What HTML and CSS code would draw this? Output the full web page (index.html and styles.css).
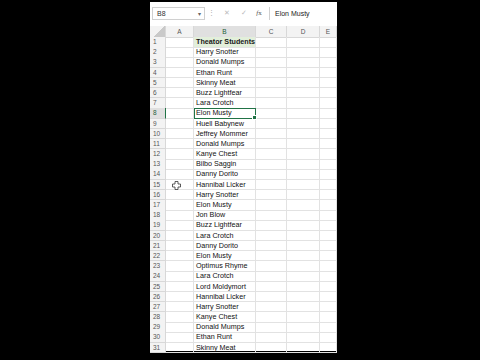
FILE: index.html
```html
<!DOCTYPE html>
<html lang="en">
<head>
    <meta charset="UTF-8">
    <meta name="viewport" content="width=device-width, initial-scale=1.0">
    <title>Theator Students</title>
    <link rel="stylesheet" href="styles.css">
</head>
<body>
    <div class="excel">
        <div class="formula-bar">
            <div class="name-box"><span>B8</span><span class="arrow">&#9662;</span></div>
            <span class="dots">&#8942;</span>
            <span class="fbtn">&#10005;</span>
            <span class="fbtn">&#10003;</span>
            <span class="fx"><i>f</i>x</span>
            <div class="formula">Elon Musty</div>
        </div>
        <div class="grid">
            <div class="row head"><span class="corner"></span><span>A</span><span class="sel">B</span><span>C</span><span>D</span><span>E</span></div>
            <div class="row"><span class="rh">1</span><span></span><span class="title">Theator Students</span><span></span><span></span><span></span></div>
            <div class="row"><span class="rh">2</span><span></span><span>Harry Snotter</span><span></span><span></span><span></span></div>
            <div class="row"><span class="rh">3</span><span></span><span>Donald Mumps</span><span></span><span></span><span></span></div>
            <div class="row"><span class="rh">4</span><span></span><span>Ethan Runt</span><span></span><span></span><span></span></div>
            <div class="row"><span class="rh">5</span><span></span><span>Skinny Meat</span><span></span><span></span><span></span></div>
            <div class="row"><span class="rh">6</span><span></span><span>Buzz Lightfear</span><span></span><span></span><span></span></div>
            <div class="row"><span class="rh">7</span><span></span><span>Lara Crotch</span><span></span><span></span><span></span></div>
            <div class="row"><span class="rh active">8</span><span></span><span class="cursor">Elon Musty</span><span></span><span></span><span></span></div>
            <div class="row"><span class="rh">9</span><span></span><span>Huell Babynew</span><span></span><span></span><span></span></div>
            <div class="row"><span class="rh">10</span><span></span><span>Jeffrey Mommer</span><span></span><span></span><span></span></div>
            <div class="row"><span class="rh">11</span><span></span><span>Donald Mumps</span><span></span><span></span><span></span></div>
            <div class="row"><span class="rh">12</span><span></span><span>Kanye Chest</span><span></span><span></span><span></span></div>
            <div class="row"><span class="rh">13</span><span></span><span>Bilbo Saggin</span><span></span><span></span><span></span></div>
            <div class="row"><span class="rh">14</span><span></span><span>Danny Dorito</span><span></span><span></span><span></span></div>
            <div class="row"><span class="rh">15</span><span class="pointer-cell"><svg class="pointer" width="9" height="9" viewBox="0 0 9 9"><path d="M3 0.5h3v2.5h2.5v3h-2.5v2.5h-3v-2.5h-2.5v-3h2.5z" fill="#fff" stroke="#333" stroke-width="0.8"/></svg></span><span>Hannibal Licker</span><span></span><span></span><span></span></div>
            <div class="row"><span class="rh">16</span><span></span><span>Harry Snotter</span><span></span><span></span><span></span></div>
            <div class="row"><span class="rh">17</span><span></span><span>Elon Musty</span><span></span><span></span><span></span></div>
            <div class="row"><span class="rh">18</span><span></span><span>Jon Blow</span><span></span><span></span><span></span></div>
            <div class="row"><span class="rh">19</span><span></span><span>Buzz Lightfear</span><span></span><span></span><span></span></div>
            <div class="row"><span class="rh">20</span><span></span><span>Lara Crotch</span><span></span><span></span><span></span></div>
            <div class="row"><span class="rh">21</span><span></span><span>Danny Dorito</span><span></span><span></span><span></span></div>
            <div class="row"><span class="rh">22</span><span></span><span>Elon Musty</span><span></span><span></span><span></span></div>
            <div class="row"><span class="rh">23</span><span></span><span>Optimus Rhyme</span><span></span><span></span><span></span></div>
            <div class="row"><span class="rh">24</span><span></span><span>Lara Crotch</span><span></span><span></span><span></span></div>
            <div class="row"><span class="rh">25</span><span></span><span>Lord Moldymort</span><span></span><span></span><span></span></div>
            <div class="row"><span class="rh">26</span><span></span><span>Hannibal Licker</span><span></span><span></span><span></span></div>
            <div class="row"><span class="rh">27</span><span></span><span>Harry Snotter</span><span></span><span></span><span></span></div>
            <div class="row"><span class="rh">28</span><span></span><span>Kanye Chest</span><span></span><span></span><span></span></div>
            <div class="row"><span class="rh">29</span><span></span><span>Donald Mumps</span><span></span><span></span><span></span></div>
            <div class="row"><span class="rh">30</span><span></span><span>Ethan Runt</span><span></span><span></span><span></span></div>
            <div class="row"><span class="rh">31</span><span></span><span>Skinny Meat</span><span></span><span></span><span></span></div>
        </div>
    </div>
</body>
</html>
```

FILE: styles.css
```css
body {
    margin: 0;
    width: 480px;
    height: 360px;
    background-color: #000;
    font-family: "Liberation Sans", Arial, sans-serif;
    overflow: hidden;
}
.excel {
    width: 187px;
    height: 349px;
    margin: 2px 0 0 150px;
    background-color: #fff;
}
.formula-bar {
    display: flex;
    align-items: center;
    height: 22px;
    padding: 0 0 0 2px;
    box-sizing: border-box;
    font-size: 7px;
    color: #333;
}
.name-box {
    display: flex;
    justify-content: space-between;
    align-items: center;
    width: 53px;
    height: 13px;
    padding: 0 3px 0 4px;
    box-sizing: border-box;
    border: 1px solid #d0d0d0;
}
.arrow {
    font-size: 6px;
    color: #666;
}
.dots {
    margin-left: 3px;
    width: 10px;
    color: #aaa;
}
.fbtn {
    width: 17px;
    text-align: center;
    color: #bbb;
}
.fx {
    width: 14px;
    text-align: center;
    color: #555;
    font-family: "Liberation Serif", serif;
}
.formula {
    flex: 1;
    height: 13px;
    line-height: 13px;
    margin-left: 3px;
    padding-left: 5px;
    border-left: 1px solid #d0d0d0;
    color: #222;
}
.grid {
    margin-top: 2px;
}
.row {
    display: grid;
    grid-template-columns: 16px 28px 62px 31px 33px 17px;
    height: 10.2px;
    font-size: 7.2px;
    color: #111;
}
.row span {
    position: relative;
    box-sizing: border-box;
    border-right: 1px solid #e2e2e2;
    border-bottom: 1px solid #e2e2e2;
    padding-left: 2px;
    line-height: 9.5px;
    white-space: nowrap;
    overflow: visible;
}
.row.head {
    height: 11px;
}
.row.head span {
    background-color: #f3f3f3;
    border-color: #d8d8d8;
    color: #555;
    text-align: center;
    padding: 0;
    line-height: 11px;
    font-size: 6.5px;
}
.row.head .sel {
    background-color: #e0e0e0;
    border-bottom: 1px solid #217346;
    color: #1e5e38;
}
.corner {
    background: linear-gradient(135deg, #f3f3f3 55%, #c9c9c9 56%) !important;
}
.row .rh {
    background-color: #f3f3f3;
    border-color: #d8d8d8;
    color: #555;
    padding: 0 0 0 3px;
    font-size: 6.5px;
}
.row .rh.active {
    background-color: #e0e0e0;
    border-right: 1px solid #217346;
    color: #1e5e38;
}
.title {
    background-color: #e2efda;
    font-weight: bold;
    color: #1a1a1a;
}
.cursor {
    outline: 1.5px solid #217346;
    outline-offset: -1px;
    z-index: 1;
}
.cursor::after {
    content: "";
    position: absolute;
    right: -2px;
    bottom: -2px;
    width: 3px;
    height: 3px;
    background-color: #217346;
    border: 1px solid #fff;
}
.pointer {
    position: absolute;
    left: 6px;
    top: 1px;
}
```
